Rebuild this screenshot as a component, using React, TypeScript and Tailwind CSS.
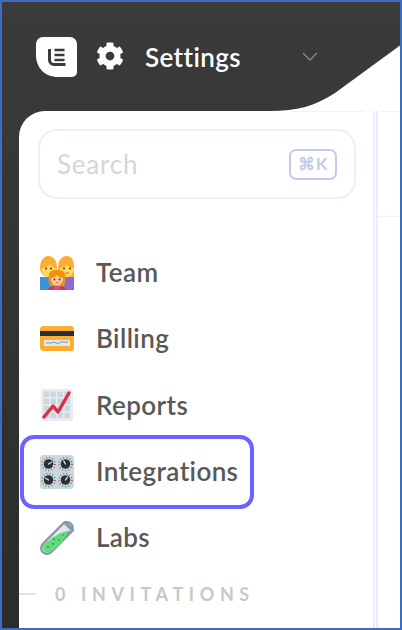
import type { ReactNode } from 'react';
import { FaCog } from 'react-icons/fa';

function Logo() {
  return (
    <svg width="41" height="40" viewBox="0 0 41 40" className="shrink-0">
      <path d="M7 0H34a7 7 0 0 1 7 7V35a5 5 0 0 1-5 5H22C9 40 0 31 0 18V7a7 7 0 0 1 7-7Z" fill="#fff" />
      <path d="M13.500 12v11a4.500 4.500 0 0 0 4.500 4.500h11.500" fill="none" stroke="#3a3a3a" strokeWidth="3" />
      <path d="M18.500 13h10M18.500 18h10M18.500 23h10" fill="none" stroke="#3a3a3a" strokeWidth="2.500" />
    </svg>
  );
}

function FamilyEmoji() {
  return (
    <svg width="34" height="34" viewBox="0 0 34 34">
      <path d="M0 21h14v13H0Z" fill="#3b94d9" />
      <path d="M20 21h14v13H20Z" fill="#9266cc" />
      <path d="M0 12C0 4 4 0 8.500 0S17 4 17 12c0 5-4 9-8.500 9S0 17 0 12Z" fill="#ffac33" />
      <path d="M18 12c0-8 4-12 8.500-12S34 3 34 12v9H22c-3-3-4-5-4-9Z" fill="#ffac33" />
      <path d="M1.500 12c3 0 6.500-1 8.500-4 1 2 3 3.500 5.500 4 0 5-3.500 9-7 9s-7-4-7-9Z" fill="#ffdc5d" />
      <path d="M20 12c3 0 5.500-1 7-4 1 3 3.500 4 7 4v2c-1 4-3.500 7-7 7s-7-4-7-9Z" fill="#ffdc5d" />
      <circle cx="6" cy="12.500" r="1" fill="#662113" />
      <circle cx="11" cy="12.500" r="1" fill="#662113" />
      <circle cx="24" cy="12.500" r="1" fill="#662113" />
      <circle cx="30" cy="12.500" r="1" fill="#662113" />
      <path d="M25 17h4" stroke="#c1694f" strokeWidth="1" />
      <path d="M8 34c0-3 4-4 9-4s9 1 9 4Z" fill="#dd2e44" opacity="0.85" />
      <path d="M8.500 22c0-8 4-8 8.500-8s8.500 0 8.500 8c0 4-1 7-1.500 8H10c-.5-1-1.500-4-1.500-8Z" fill="#f4900c" />
      <path d="M11 22c3 0 4.500-2 6-3 1 1 3 3 6 3 0 4-2.500 7.500-6 7.500S11 26 11 22Z" fill="#ffcc99" />
      <circle cx="14.500" cy="23.500" r="0.900" fill="#662113" />
      <circle cx="19.500" cy="23.500" r="0.900" fill="#662113" />
      <path d="M15.500 26.500h3" stroke="#c1694f" strokeWidth="0.900" />
    </svg>
  );
}

function CardEmoji() {
  return (
    <svg width="34" height="34" viewBox="0 0 34 34">
      <rect x="0" y="4" width="34" height="25" rx="3.500" fill="#ffac33" />
      <path d="M0 9h34v5H0Z" fill="#292f33" />
      <path d="M4 18h26v6H4Z" fill="#e1e8ed" />
      <path d="M6 22c2-3 3 0 5-1s3-1 5 0 3 0 5-1 3 1 7 0" fill="none" stroke="#7a8b99" strokeWidth="1" />
    </svg>
  );
}

function ChartEmoji() {
  const cells = [0, 1, 2, 3];
  return (
    <svg width="34" height="34" viewBox="0 0 34 34">
      <rect x="1" y="0" width="32" height="32" rx="3" fill="#e6ecf0" />
      {cells.map((r) =>
        cells.map((c) => (
          <rect key={`${r}-${c}`} x={3.500 + c * 7} y={2.500 + r * 7} width="5.500" height="5.500" fill="#ccd6dd" />
        )),
      )}
      <path d="M4 28 13 17 18 23 29 4" fill="none" stroke="#dd2e44" strokeWidth="3.400" strokeLinecap="round" strokeLinejoin="round" />
    </svg>
  );
}

function Knob({ x, y, angle }: { x: number; y: number; angle: number }) {
  return (
    <g transform={`translate(${x} ${y})`}>
      <circle r="6.600" fill="none" stroke="#292f33" strokeWidth="1.200" strokeDasharray="0.700 2.500" />
      <circle r="4.800" fill="#292f33" />
      <path d="M0 0L0-3.400" stroke="#e1e8ed" strokeWidth="1.300" strokeLinecap="round" transform={`rotate(${angle})`} />
      <circle cx="6.400" cy="0.500" r="0.700" fill="#dd2e44" />
    </g>
  );
}

function KnobsEmoji() {
  return (
    <svg width="34" height="34" viewBox="0 0 34 34">
      <rect width="34" height="34" rx="3.500" fill="#ccd6dd" />
      <Knob x={8.500} y={9} angle={60} />
      <Knob x={25.500} y={9} angle={-30} />
      <Knob x={8.500} y={25} angle={-60} />
      <Knob x={25.500} y={25} angle={35} />
    </svg>
  );
}

function TubeEmoji() {
  return (
    <svg width="34" height="34" viewBox="0 0 34 34">
      <path d="M27 7 7 27" stroke="#8899a6" strokeWidth="14" strokeLinecap="round" />
      <path d="M27 7 7 27" stroke="#e1e8ed" strokeWidth="9.500" strokeLinecap="round" />
      <path d="M30 10C23 9 12 16 2.500 25c-.5 4 3 7.500 7 6.500C18 26 25 18 30 10Z" fill="#5fdc7c" />
      <path d="M30 10c-1 2-2.500 4-4 6" stroke="#8899a6" strokeWidth="2" />
      <circle cx="8" cy="26" r="1" fill="#2b9a4f" />
      <circle cx="13" cy="23" r="1" fill="#2b9a4f" />
      <circle cx="14" cy="18" r="0.900" fill="#2b9a4f" />
      <circle cx="19" cy="19" r="0.900" fill="#2b9a4f" />
      <circle cx="23" cy="14" r="0.800" fill="#2b9a4f" />
      <path d="M25 1.500 32.500 9" stroke="#8899a6" strokeWidth="3.500" strokeLinecap="round" />
    </svg>
  );
}

function NavRow({ icon, label, active }: { icon: ReactNode; label: string; active?: boolean }) {
  return (
    <div
      className={`ml-[5px] flex h-[66.25px] w-[226px] items-center gap-[22px] rounded-[10px] pl-[16px] ${
        active ? 'outline-[4px] outline-solid outline-[#6c63ff]' : ''
      }`}
    >
      {icon}
      <span className="mb-[2px] text-[26px] leading-[36px] font-semibold tracking-[0.4px] text-[#585858]">{label}</span>
    </div>
  );
}

export default function App() {
  return (
    <div className="h-[630px] w-[402px] border-2 border-[#3f6cc0] font-['Lato',sans-serif]">
      <div className="relative flex h-full flex-col overflow-hidden bg-gradient-to-b from-[#3b3b3b] to-[#2c2c2c]">
        {/* the white wedge top right, behind the header */}
        <svg className="absolute top-0 left-0" width="398" height="626" viewBox="2 2 398 626">
          <path d="M402 44 335 93C315 106 297 111 270 111H402Z" fill="#fff" />
        </svg>

        <header className="relative flex h-[109px] shrink-0 items-start pt-[35px] pl-[34px]">
          <Logo />
          <FaCog className="mt-[5px] ml-[19px] text-[28px] text-white" />
          <span className="mt-[2px] ml-[21px] w-[157px] text-[26px] leading-[36px] font-semibold tracking-[0.4px] text-white">
            Settings
          </span>
          <svg className="mt-[15px]" width="16" height="9" viewBox="0 0 16 9">
            <path d="M1 1l7 7 7-7" fill="none" stroke="#8a8a8a" strokeWidth="1.300" />
          </svg>
        </header>

        <main className="relative flex flex-1 pl-[17px]">
          <aside className="w-[356px] rounded-tl-[26px] border-r-2 border-[#ecebfa] bg-white pt-[18px]">
            <div className="mx-[19px] flex h-[70px] w-[318px] items-center justify-between rounded-[19px] border-2 border-[#eceefc] pr-[17px] pl-[17px]">
              <span className="mt-[1px] text-[26px] tracking-[0.8px] text-[#d6d6d6]">Search</span>
              <kbd className="flex h-[31px] w-[48px] items-center justify-center rounded-[7px] border-2 border-[#c3cbec] font-['Lato',sans-serif] text-[17px] font-bold tracking-[1px] text-[#c3cbec]">
                ⌘K
              </kbd>
            </div>
            <nav className="mt-[41px]">
              <NavRow icon={<FamilyEmoji />} label="Team" />
              <NavRow icon={<CardEmoji />} label="Billing" />
              <NavRow icon={<ChartEmoji />} label="Reports" />
              <NavRow icon={<KnobsEmoji />} label="Integrations" active />
              <NavRow icon={<TubeEmoji />} label="Labs" />
            </nav>
            <div className="mt-[11px] flex items-center gap-[19px]">
              <div className="h-[2px] w-[17px] bg-[#e4e4e4]" />
              <span className="text-[18px] leading-[24px] font-bold tracking-[5.6px] whitespace-nowrap text-[#c8c8c8]">
                0 INVITATIONS
              </span>
            </div>
          </aside>
          <div className="flex-1 bg-white pl-[1px]">
            <div className="h-full border-l-2 border-[#ecebfa]">
              <div className="h-[106px] border-b border-[#f1f1fb]" />
            </div>
          </div>
          {/* faint header rule, it runs over the panels */}
          <div className="absolute top-0 left-[288px] h-px w-[74px] bg-[#f1f1f6]" />
          <div className="absolute top-0 left-[379px] h-px w-[19px] bg-[#f1f1f6]" />
        </main>
      </div>
    </div>
  );
}
